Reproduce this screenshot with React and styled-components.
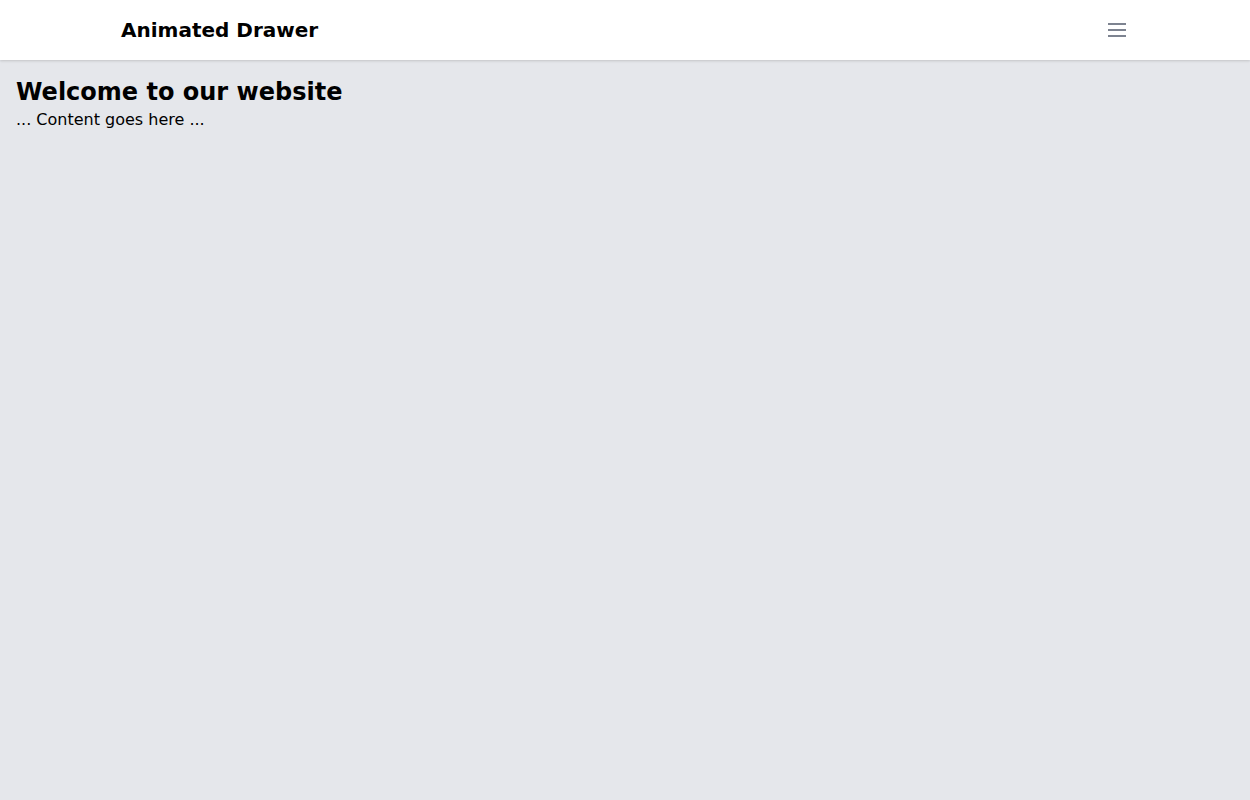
import React from 'react'
import styled, { createGlobalStyle } from 'styled-components'

const GlobalStyle = createGlobalStyle`
  html, body {
    margin: 0;
    padding: 0;
  }
  body {
    font-family: "DejaVu Sans", sans-serif;
    background-color: #e5e7eb;
    color: #000;
  }
  * {
    box-sizing: border-box;
  }
`

function App() {
  return (
    <>
      <GlobalStyle />
      <Page>
        <Header>
          <Bar>
            <Brand>Animated Drawer</Brand>
            <MenuButton aria-label="Open menu">
              <svg width="24" height="24" viewBox="0 0 24 24" fill="none" stroke="currentColor" strokeWidth="1.75">
                <line x1="3" y1="6" x2="21" y2="6" />
                <line x1="3" y1="12" x2="21" y2="12" />
                <line x1="3" y1="18" x2="21" y2="18" />
              </svg>
            </MenuButton>
          </Bar>
        </Header>
        <Main>
          <Heading>Welcome to our website</Heading>
          <Text>... Content goes here ...</Text>
        </Main>
      </Page>
    </>
  )
}

const Page = styled.div`
  min-height: 100vh;
  background-color: #e5e7eb;
`
const Header = styled.header`
  height: 60px;
  background-color: #fff;
  box-shadow: 0 1px 3px rgba(0, 0, 0, 0.1), 0 1px 2px rgba(0, 0, 0, 0.06);
  position: relative;
`
const Bar = styled.div`
  max-width: 1024px;
  height: 100%;
  margin: 0 auto;
  padding: 0 8px;
  display: flex;
  align-items: center;
  justify-content: space-between;
`
const Brand = styled.div`
  font-size: 20px;
  line-height: 28px;
  font-weight: 700;
`
const MenuButton = styled.button`
  display: flex;
  align-items: center;
  justify-content: center;
  padding: 0;
  margin-top: -1px;
  border: none;
  background: none;
  color: #6b7280;
  cursor: pointer;
`
const Main = styled.main`
  padding: 16px;
`
const Heading = styled.h1`
  margin: 0;
  font-size: 24px;
  line-height: 32px;
  font-weight: 700;
`
const Text = styled.p`
  margin: 0;
  font-size: 16px;
  line-height: 24px;
`

export default App
